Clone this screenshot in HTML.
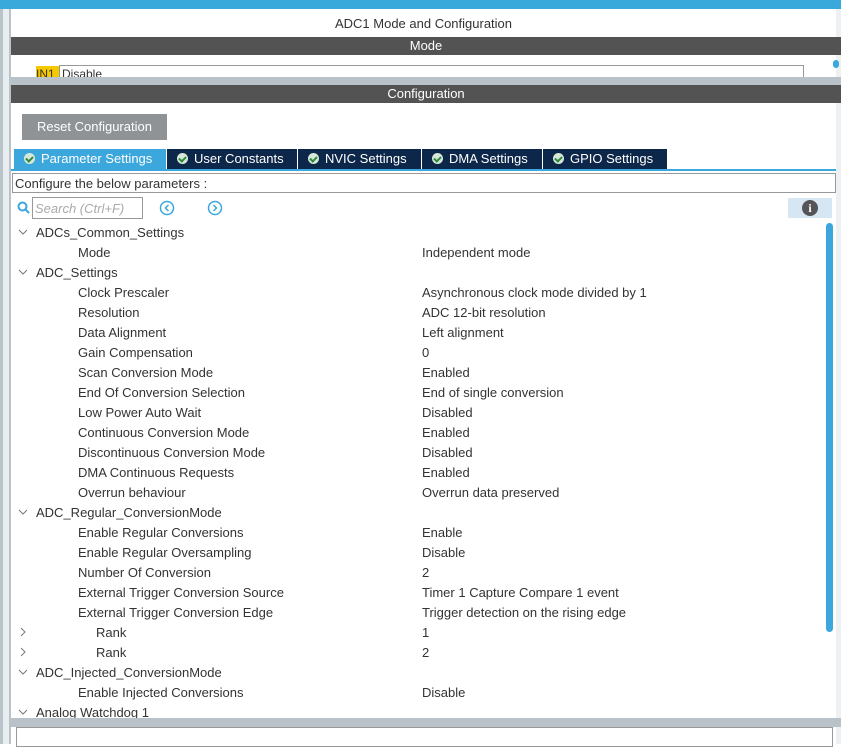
<!DOCTYPE html>
<html><head><meta charset="utf-8"><style>
*{margin:0;padding:0;box-sizing:border-box}
body{width:841px;height:744px;overflow:hidden;background:#fff;font-family:"Liberation Sans",sans-serif;font-size:13px;color:#333;position:relative}
.a{position:absolute}
.bar{background:#525352;color:#fff;text-align:center;font-size:13px;line-height:18px}
.row{position:absolute;height:20px;line-height:22px;white-space:nowrap}
.tab{position:absolute;top:149px;height:20px;line-height:20px;color:#fff;background:#0c2749;font-size:13px;padding-left:10px}
.tab i{display:inline-block;width:11px;height:11px;border-radius:50%;background:#d8e8d8;vertical-align:-1px;margin-right:6px;position:relative}
.tab i:after{content:"";position:absolute;left:3px;top:2px;width:3px;height:5px;border:solid #2d8a3e;border-width:0 2px 2px 0;transform:rotate(45deg)}
.car{position:absolute;left:18px;width:10px;height:10px}
</style></head><body>
<div class="a" style="left:0;top:0;width:841px;height:9px;background:#39a9db"></div>
<div class="a" style="left:0;top:9px;width:11px;height:735px;background:#b9c3ca"></div>
<div class="a" style="left:3px;top:9px;width:6px;height:735px;background:#e8edf0"></div>
<div class="a" style="left:836px;top:9px;width:5px;height:735px;background:#eef1f3"></div>
<div class="a" style="left:11px;top:16px;width:825px;text-align:center;color:#333;font-size:13px">ADC1 Mode and Configuration</div>
<div class="a bar" style="left:11px;top:37px;width:830px;height:18px">Mode</div>
<div class="a" style="left:36px;top:66px;width:23px;height:11px;background:#f5c800;font-size:12px;line-height:16px;overflow:hidden">IN1</div>
<div class="a" style="left:59px;top:65px;width:745px;height:12px;border:1px solid #999;border-bottom:none;font-size:12px;padding-left:2px;line-height:16px;overflow:hidden">Disable</div>
<div class="a" style="left:833px;top:60px;width:6px;height:8px;border-radius:3px;background:#39a9db"></div>
<div class="a" style="left:11px;top:77px;width:830px;height:8px;background:#b8c2c8"></div>
<div class="a bar" style="left:11px;top:85px;width:830px;height:18px">Configuration</div>
<div class="a" style="left:22px;top:114px;width:145px;height:26px;background:#8f9396;color:#fff;line-height:26px;text-align:center">Reset Configuration</div>
<div class="tab" style="left:14px;width:152px;background:#3ba7dc"><i></i>Parameter Settings</div>
<div class="tab" style="left:167px;width:130px"><i></i>User Constants</div>
<div class="tab" style="left:298px;width:123px"><i></i>NVIC Settings</div>
<div class="tab" style="left:422px;width:120px"><i></i>DMA Settings</div>
<div class="tab" style="left:543px;width:124px"><i></i>GPIO Settings</div>
<div class="a" style="left:11px;top:169px;width:825px;height:2px;background:#3ba7dc"></div>
<div class="a" style="left:12px;top:173px;width:824px;height:20px;border:1px solid #999;line-height:20px;padding-left:2px;font-size:13px">Configure the below parameters :</div>
<svg class="a" style="left:17px;top:201px" width="14" height="14"><circle cx="5.5" cy="5.5" r="4" fill="none" stroke="#3ba7dc" stroke-width="2"/><line x1="8.5" y1="8.5" x2="12" y2="12" stroke="#3ba7dc" stroke-width="2"/></svg>
<div class="a" style="left:32px;top:197px;width:111px;height:22px;border:1px solid #999;color:#aaa;font-style:italic;line-height:21px;padding-left:2px">Search (Ctrl+F)</div>
<svg class="a" style="left:159px;top:200px" width="16" height="16"><circle cx="8" cy="8" r="6.5" fill="none" stroke="#3ba7dc" stroke-width="1.5"/><polyline points="9.5,5 6.5,8 9.5,11" fill="none" stroke="#3ba7dc" stroke-width="1.5"/></svg>
<svg class="a" style="left:207px;top:200px" width="16" height="16"><circle cx="8" cy="8" r="6.5" fill="none" stroke="#3ba7dc" stroke-width="1.5"/><polyline points="6.5,5 9.5,8 6.5,11" fill="none" stroke="#3ba7dc" stroke-width="1.5"/></svg>
<div class="a" style="left:788px;top:198px;width:44px;height:20px;background:#d6e6f3"></div>
<div class="a" style="left:802px;top:200px;width:16px;height:16px;border-radius:50%;background:#555;color:#fff;font-weight:bold;font-size:12px;line-height:16px;text-align:center;font-family:'Liberation Serif',serif">i</div>
<div class="a" style="left:826px;top:223px;width:7px;height:409px;border-radius:4px;background:#3ba7dc"></div>

<svg class="car" style="top:228px"><polyline points="1,2 5,6 9,2" fill="none" stroke="#777"/></svg><div class="row" style="left:36px;top:222px">ADCs_Common_Settings</div>
<div class="row" style="left:78px;top:242px">Mode</div><div class="row" style="left:422px;top:242px">Independent mode</div>
<svg class="car" style="top:268px"><polyline points="1,2 5,6 9,2" fill="none" stroke="#777"/></svg><div class="row" style="left:36px;top:262px">ADC_Settings</div>
<div class="row" style="left:78px;top:282px">Clock Prescaler</div><div class="row" style="left:422px;top:282px">Asynchronous clock mode divided by 1</div>
<div class="row" style="left:78px;top:302px">Resolution</div><div class="row" style="left:422px;top:302px">ADC 12-bit resolution</div>
<div class="row" style="left:78px;top:322px">Data Alignment</div><div class="row" style="left:422px;top:322px">Left alignment</div>
<div class="row" style="left:78px;top:342px">Gain Compensation</div><div class="row" style="left:422px;top:342px">0</div>
<div class="row" style="left:78px;top:362px">Scan Conversion Mode</div><div class="row" style="left:422px;top:362px">Enabled</div>
<div class="row" style="left:78px;top:382px">End Of Conversion Selection</div><div class="row" style="left:422px;top:382px">End of single conversion</div>
<div class="row" style="left:78px;top:402px">Low Power Auto Wait</div><div class="row" style="left:422px;top:402px">Disabled</div>
<div class="row" style="left:78px;top:422px">Continuous Conversion Mode</div><div class="row" style="left:422px;top:422px">Enabled</div>
<div class="row" style="left:78px;top:442px">Discontinuous Conversion Mode</div><div class="row" style="left:422px;top:442px">Disabled</div>
<div class="row" style="left:78px;top:462px">DMA Continuous Requests</div><div class="row" style="left:422px;top:462px">Enabled</div>
<div class="row" style="left:78px;top:482px">Overrun behaviour</div><div class="row" style="left:422px;top:482px">Overrun data preserved</div>
<svg class="car" style="top:508px"><polyline points="1,2 5,6 9,2" fill="none" stroke="#777"/></svg><div class="row" style="left:36px;top:502px">ADC_Regular_ConversionMode</div>
<div class="row" style="left:78px;top:522px">Enable Regular Conversions</div><div class="row" style="left:422px;top:522px">Enable</div>
<div class="row" style="left:78px;top:542px">Enable Regular Oversampling</div><div class="row" style="left:422px;top:542px">Disable</div>
<div class="row" style="left:78px;top:562px">Number Of Conversion</div><div class="row" style="left:422px;top:562px">2</div>
<div class="row" style="left:78px;top:582px">External Trigger Conversion Source</div><div class="row" style="left:422px;top:582px">Timer 1 Capture Compare 1 event</div>
<div class="row" style="left:78px;top:602px">External Trigger Conversion Edge</div><div class="row" style="left:422px;top:602px">Trigger detection on the rising edge</div>
<svg class="car" style="top:627px"><polyline points="3,1 7,5 3,9" fill="none" stroke="#777"/></svg><div class="row" style="left:96px;top:622px">Rank</div><div class="row" style="left:422px;top:622px">1</div>
<svg class="car" style="top:647px"><polyline points="3,1 7,5 3,9" fill="none" stroke="#777"/></svg><div class="row" style="left:96px;top:642px">Rank</div><div class="row" style="left:422px;top:642px">2</div>
<svg class="car" style="top:668px"><polyline points="1,2 5,6 9,2" fill="none" stroke="#777"/></svg><div class="row" style="left:36px;top:662px">ADC_Injected_ConversionMode</div>
<div class="row" style="left:78px;top:682px">Enable Injected Conversions</div><div class="row" style="left:422px;top:682px">Disable</div>
<svg class="car" style="top:708px"><polyline points="1,2 5,6 9,2" fill="none" stroke="#777"/></svg><div class="row" style="left:36px;top:702px;height:16px;overflow:hidden">Analog Watchdog 1</div>
<div class="a" style="left:11px;top:718px;width:830px;height:9px;background:#b8c2c8"></div>
<div class="a" style="left:16px;top:727px;width:817px;height:20px;border:1px solid #999;background:#fff"></div>
</body></html>
